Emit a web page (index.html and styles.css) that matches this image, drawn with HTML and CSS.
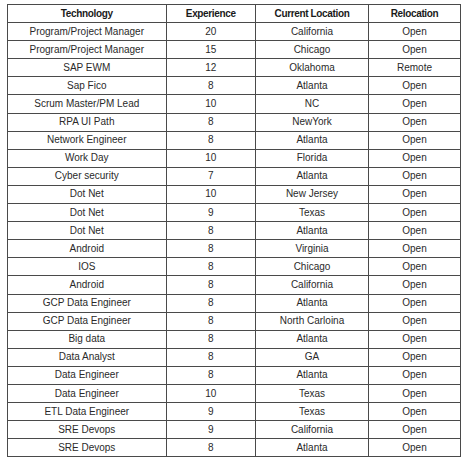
FILE: index.html
```html
<!DOCTYPE html>
<html>
<head>
<meta charset="utf-8">
<link rel="stylesheet" href="styles.css">
</head>
<body>
<table class="grid">
  <colgroup>
    <col class="c-tech"><col class="c-exp"><col class="c-loc"><col class="c-rel">
  </colgroup>
  <thead>
    <tr><th>Technology</th><th>Experience</th><th>Current Location</th><th>Relocation</th></tr>
  </thead>
  <tbody>
    <tr><td>Program/Project Manager</td><td>20</td><td>California</td><td>Open</td></tr>
    <tr><td>Program/Project Manager</td><td>15</td><td>Chicago</td><td>Open</td></tr>
    <tr><td>SAP EWM</td><td>12</td><td>Oklahoma</td><td>Remote</td></tr>
    <tr><td>Sap Fico</td><td>8</td><td>Atlanta</td><td>Open</td></tr>
    <tr><td>Scrum Master/PM Lead</td><td>10</td><td>NC</td><td>Open</td></tr>
    <tr><td>RPA UI Path</td><td>8</td><td>NewYork</td><td>Open</td></tr>
    <tr><td>Network Engineer</td><td>8</td><td>Atlanta</td><td>Open</td></tr>
    <tr><td>Work Day</td><td>10</td><td>Florida</td><td>Open</td></tr>
    <tr><td>Cyber security</td><td>7</td><td>Atlanta</td><td>Open</td></tr>
    <tr><td>Dot Net</td><td>10</td><td>New Jersey</td><td>Open</td></tr>
    <tr><td>Dot Net</td><td>9</td><td>Texas</td><td>Open</td></tr>
    <tr><td>Dot Net</td><td>8</td><td>Atlanta</td><td>Open</td></tr>
    <tr><td>Android</td><td>8</td><td>Virginia</td><td>Open</td></tr>
    <tr><td>IOS</td><td>8</td><td>Chicago</td><td>Open</td></tr>
    <tr><td>Android</td><td>8</td><td>California</td><td>Open</td></tr>
    <tr><td>GCP Data Engineer</td><td>8</td><td>Atlanta</td><td>Open</td></tr>
    <tr><td>GCP Data Engineer</td><td>8</td><td>North Carloina</td><td>Open</td></tr>
    <tr><td>Big data</td><td>8</td><td>Atlanta</td><td>Open</td></tr>
    <tr><td>Data Analyst</td><td>8</td><td>GA</td><td>Open</td></tr>
    <tr><td>Data Engineer</td><td>8</td><td>Atlanta</td><td>Open</td></tr>
    <tr><td>Data Engineer</td><td>10</td><td>Texas</td><td>Open</td></tr>
    <tr><td>ETL Data Engineer</td><td>9</td><td>Texas</td><td>Open</td></tr>
    <tr><td>SRE Devops</td><td>9</td><td>California</td><td>Open</td></tr>
    <tr><td>SRE Devops</td><td>8</td><td>Atlanta</td><td>Open</td></tr>
  </tbody>
</table>
</body>
</html>
```
FILE: styles.css
```css
html, body {
  margin: 0;
  padding: 0;
  background: #ffffff;
}
body {
  padding: 4px 0 0 7px;
  font-family: "Liberation Sans", Arial, sans-serif;
  color: #2a2a2a;
}
.grid {
  border-collapse: collapse;
  table-layout: fixed;
  width: 453px;
  font-size: 10px;
}
.c-tech { width: 158.5px; }
.c-exp { width: 89.5px; }
.c-loc { width: 113px; }
.c-rel { width: 92px; }
.grid th, .grid td {
  border: 1px solid #4a4a4a;
  height: 18.1px;
  box-sizing: border-box;
  padding: 0;
  text-align: center;
  vertical-align: middle;
  line-height: 12px;
  white-space: nowrap;
}
.grid th {
  font-weight: bold;
  color: #1a1a1a;
  letter-spacing: -0.35px;
}
```
